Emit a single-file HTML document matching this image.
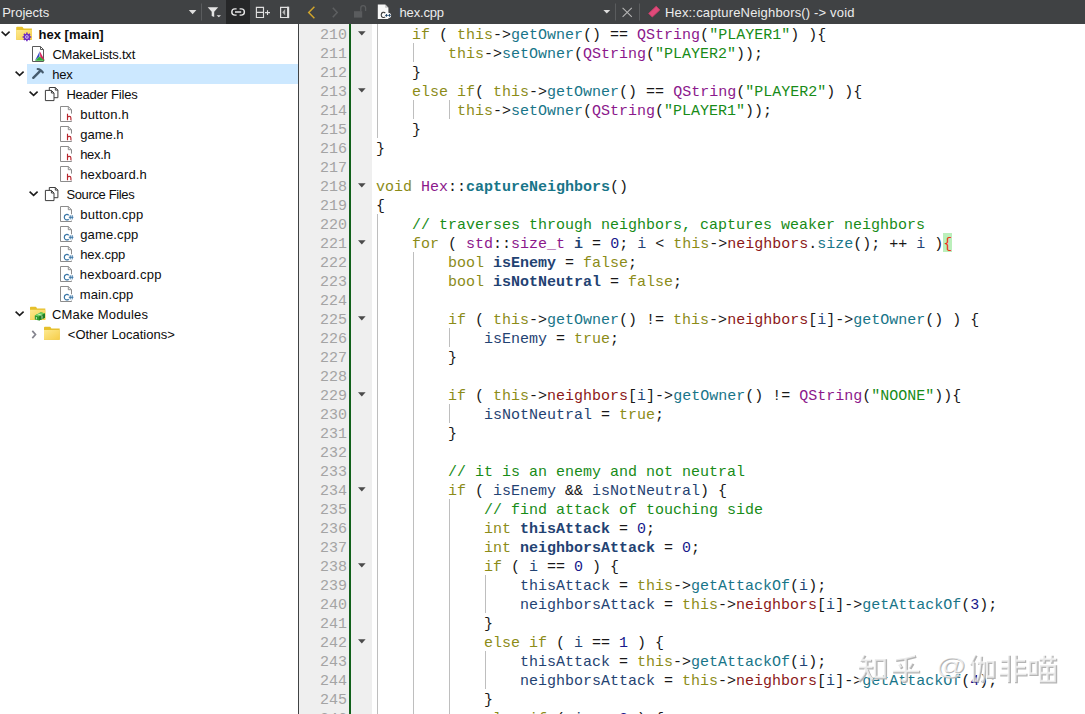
<!DOCTYPE html>
<html>
<head>
<meta charset="utf-8">
<title>hex.cpp - Qt Creator</title>
<style>
*{box-sizing:border-box;margin:0;padding:0}
html,body{width:1085px;height:714px;overflow:hidden;background:#fff;font-family:"Liberation Sans",sans-serif}
body{position:relative;font-family:"Liberation Sans",sans-serif;font-size:13px;color:#1a1a1a}
#topbar{position:absolute;left:0;top:0;width:1085px;height:24px;background:#404244}
#topbar .t{position:absolute;top:1px;height:24px;line-height:24px;color:#ececec;font-size:13px;white-space:nowrap}
#topbar svg{position:absolute}
.sep{position:absolute;top:3px;width:1px;height:18px;background:#595b5d}
#linkbg{position:absolute;left:226px;top:0;width:24px;height:24px;background:#262728}
#splitter{position:absolute;left:298px;top:0;width:1px;height:714px;background:#404244}
/* sidebar */
#side{position:absolute;left:0;top:0;width:298px;height:714px}
.row{position:absolute;left:0;width:298px;height:20px}
.row .sel{position:absolute;left:27px;top:0;width:271px;height:20px;background:#cce8ff}
.row .chev{position:absolute;top:7px}
.row .ic{position:absolute}
.row .tx{position:absolute;top:1px;height:20px;line-height:20px;font-size:13px;color:#0c0c0c;white-space:nowrap}
.row .tx.b{font-weight:bold}
/* editor */
#gutter{position:absolute;left:299px;top:24px;width:73px;height:690px;background:#efefef}
#green{position:absolute;left:349px;top:24px;width:2px;height:690px;background:#10601a}
.ln{position:absolute;left:299px;width:48px;height:19px;line-height:19px;text-align:right;font-family:"Liberation Mono",monospace;font-size:15px;color:#a4a4a4}
.cl{position:absolute;height:19px;line-height:19px;font-family:"Liberation Mono",monospace;font-size:15px;color:#000;white-space:pre;opacity:0.9}
.cl b{font-weight:bold}
.hl{position:relative;color:#f01800}
.hl::before{content:"";position:absolute;left:0;right:0;top:-3px;height:19px;background:#b4eeb4;z-index:-1}
.fold{position:absolute;left:358px}
.gd{position:absolute;width:1px;background:#bebebe}
</style>
</head>
<body>
<div id="side">
<div class="row" style="top:24px"><svg class="ic" style="left:0px;top:0" width="13" height="20" viewBox="0 0 13 20"><path d="M1.6 7.7 L5.6 11.4 L9.6 7.7" fill="none" stroke="#1c1c1c" stroke-width="1.6"/></svg><svg class="ic" style="left:15px;top:0" width="19" height="20" viewBox="15 0 19 20"><defs><linearGradient id="fg16" x1="0" y1="0" x2="1" y2="1"><stop offset="0" stop-color="#fde98f"/><stop offset="1" stop-color="#f6cd48"/></linearGradient></defs><path d="M16.2 3.7 q0 -0.9 0.9 -0.9 h5 q0.6 0 0.9 0.6 l0.6 1.2 h8.3 v11.1 h-15.7z" fill="#e6c02c"/><path d="M16.2 6 h15.7 v9.7 h-15.7z" fill="url(#fg16)"/><path d="M29.50 12.90 L31.20 12.90 M28.74 14.74 L29.94 15.94 M26.90 15.50 L26.90 17.20 M25.06 14.74 L23.86 15.94 M24.30 12.90 L22.60 12.90 M25.06 11.06 L23.86 9.86 M26.90 10.30 L26.90 8.60 M28.74 11.06 L29.94 9.86 " stroke="#6d2cc0" stroke-width="1.5" fill="none"/><circle cx="26.9" cy="12.9" r="2.5" fill="#efe4fb" stroke="#6d2cc0" stroke-width="1.5"/><circle cx="26.9" cy="12.9" r="0.9" fill="#6d2cc0"/></svg><span class="tx b" id="r0" style="left:38.5px;letter-spacing:0.018px">hex [main]</span></div>
<div class="row" style="top:44px"><svg class="ic" style="left:31px;top:0" width="15" height="20" viewBox="31 0 15 20"><path d="M32.5 2.5 h8 l3 3 v12 h-11z" fill="#fff" stroke="#5a5a5a" stroke-width="1"/><path d="M40.5 2.5 v3 h3" fill="none" stroke="#5a5a5a" stroke-width="1"/><path d="M39.8 7.2 L35 16.5 L39.4 12.6z" fill="#3a4cc4"/><path d="M39.8 7.2 L44.8 16.5 L40.4 14z" fill="#d8245c"/><path d="M35 16.7 L39.4 12.4 L44.8 16.7z" fill="#2eae3a"/></svg><span class="tx" id="r1" style="left:52.4px;letter-spacing:-0.184px">CMakeLists.txt</span></div>
<div class="row" style="top:64px"><div class="sel"></div><svg class="ic" style="left:13px;top:0" width="13" height="20" viewBox="13 0 13 20"><path d="M15.6 7.7 L19.6 11.4 L23.6 7.7" fill="none" stroke="#1c1c1c" stroke-width="1.6"/></svg><svg class="ic" style="left:31px;top:0" width="15" height="20" viewBox="31 0 15 20"><path d="M33.3 13.8 L40 7.1" stroke="#455b6e" stroke-width="2.4" stroke-linecap="round" fill="none"/><path d="M37.7 5 Q40.6 5.2 42.8 8.3" stroke="#455b6e" stroke-width="2.2" stroke-linecap="round" fill="none"/></svg><span class="tx" id="r2" style="left:52.2px;letter-spacing:-0.2px">hex</span></div>
<div class="row" style="top:84px"><svg class="ic" style="left:27px;top:0" width="13" height="20" viewBox="27 0 13 20"><path d="M29.6 7.7 L33.6 11.4 L37.6 7.7" fill="none" stroke="#1c1c1c" stroke-width="1.6"/></svg><svg class="ic" style="left:44px;top:0" width="16" height="20" viewBox="44 0 16 20"><path d="M49.3 3.5 h6 l2.6 2.6 v7.6 h-8.6z" fill="#fff" stroke="#3e3e3e" stroke-width="1"/><path d="M55.3 3.5 v2.6 h2.6" fill="none" stroke="#3e3e3e" stroke-width="1"/><path d="M45.4 6.4 h6 l2.6 2.6 v7.6 h-8.6z" fill="#fff" stroke="#3e3e3e" stroke-width="1"/><path d="M51.4 6.4 v2.6 h2.6" fill="none" stroke="#3e3e3e" stroke-width="1"/></svg><span class="tx" id="r3" style="left:66.4px;letter-spacing:-0.219px">Header Files</span></div>
<div class="row" style="top:104px"><svg class="ic" style="left:59px;top:0" width="15" height="20" viewBox="59 0 15 20"><path d="M60.5 2.5 h7.8 l3.2 3.2 v11.8 h-11z" fill="#fff" stroke="#8c8c8c" stroke-width="1"/><path d="M68.3 2.5 v3.2 h3.2" fill="none" stroke="#8c8c8c" stroke-width="1"/><rect x="66" y="9.6" width="7" height="7" fill="#fff"/><path d="M67.5 9.8 v6.4 M67.5 13.4 c0.5 -1.3 3.4 -1.6 3.4 0.5 v2.3" fill="none" stroke="#b8272f" stroke-width="1.15"/></svg><span class="tx" id="r4" style="left:80.2px;letter-spacing:0.229px">button.h</span></div>
<div class="row" style="top:124px"><svg class="ic" style="left:59px;top:0" width="15" height="20" viewBox="59 0 15 20"><path d="M60.5 2.5 h7.8 l3.2 3.2 v11.8 h-11z" fill="#fff" stroke="#8c8c8c" stroke-width="1"/><path d="M68.3 2.5 v3.2 h3.2" fill="none" stroke="#8c8c8c" stroke-width="1"/><rect x="66" y="9.6" width="7" height="7" fill="#fff"/><path d="M67.5 9.8 v6.4 M67.5 13.4 c0.5 -1.3 3.4 -1.6 3.4 0.5 v2.3" fill="none" stroke="#b8272f" stroke-width="1.15"/></svg><span class="tx" id="r5" style="left:80.2px;letter-spacing:0px">game.h</span></div>
<div class="row" style="top:144px"><svg class="ic" style="left:59px;top:0" width="15" height="20" viewBox="59 0 15 20"><path d="M60.5 2.5 h7.8 l3.2 3.2 v11.8 h-11z" fill="#fff" stroke="#8c8c8c" stroke-width="1"/><path d="M68.3 2.5 v3.2 h3.2" fill="none" stroke="#8c8c8c" stroke-width="1"/><rect x="66" y="9.6" width="7" height="7" fill="#fff"/><path d="M67.5 9.8 v6.4 M67.5 13.4 c0.5 -1.3 3.4 -1.6 3.4 0.5 v2.3" fill="none" stroke="#b8272f" stroke-width="1.15"/></svg><span class="tx" id="r6" style="left:80.2px;letter-spacing:-0.3px">hex.h</span></div>
<div class="row" style="top:164px"><svg class="ic" style="left:59px;top:0" width="15" height="20" viewBox="59 0 15 20"><path d="M60.5 2.5 h7.8 l3.2 3.2 v11.8 h-11z" fill="#fff" stroke="#8c8c8c" stroke-width="1"/><path d="M68.3 2.5 v3.2 h3.2" fill="none" stroke="#8c8c8c" stroke-width="1"/><rect x="66" y="9.6" width="7" height="7" fill="#fff"/><path d="M67.5 9.8 v6.4 M67.5 13.4 c0.5 -1.3 3.4 -1.6 3.4 0.5 v2.3" fill="none" stroke="#b8272f" stroke-width="1.15"/></svg><span class="tx" id="r7" style="left:80.2px;letter-spacing:0.178px">hexboard.h</span></div>
<div class="row" style="top:184px"><svg class="ic" style="left:27px;top:0" width="13" height="20" viewBox="27 0 13 20"><path d="M29.6 7.7 L33.6 11.4 L37.6 7.7" fill="none" stroke="#1c1c1c" stroke-width="1.6"/></svg><svg class="ic" style="left:44px;top:0" width="16" height="20" viewBox="44 0 16 20"><path d="M49.3 3.5 h6 l2.6 2.6 v7.6 h-8.6z" fill="#fff" stroke="#3e3e3e" stroke-width="1"/><path d="M55.3 3.5 v2.6 h2.6" fill="none" stroke="#3e3e3e" stroke-width="1"/><path d="M45.4 6.4 h6 l2.6 2.6 v7.6 h-8.6z" fill="#fff" stroke="#3e3e3e" stroke-width="1"/><path d="M51.4 6.4 v2.6 h2.6" fill="none" stroke="#3e3e3e" stroke-width="1"/></svg><span class="tx" id="r8" style="left:66.4px;letter-spacing:-0.364px">Source Files</span></div>
<div class="row" style="top:204px"><svg class="ic" style="left:59px;top:0" width="16" height="20" viewBox="59 0 16 20"><path d="M60.5 2.5 h7.8 l3.2 3.2 v11.8 h-11z" fill="#fff" stroke="#8c8c8c" stroke-width="1"/><path d="M68.3 2.5 v3.2 h3.2" fill="none" stroke="#8c8c8c" stroke-width="1"/><rect x="68" y="10.2" width="6" height="6.4" fill="#fff"/><path d="M68.6 11.3 c-0.9 -1.4 -4.3 -1.3 -4.3 1.9 c0 3.2 3.4 3.3 4.3 1.9" fill="none" stroke="#3a76a6" stroke-width="1.25"/><path d="M68.8 13.3 h4.6 M70.2 11.2 v4.2 M72.2 11.2 v4.2" stroke="#3a76a6" stroke-width="1" fill="none"/></svg><span class="tx" id="r9" style="left:80.2px;letter-spacing:0.268px">button.cpp</span></div>
<div class="row" style="top:224px"><svg class="ic" style="left:59px;top:0" width="16" height="20" viewBox="59 0 16 20"><path d="M60.5 2.5 h7.8 l3.2 3.2 v11.8 h-11z" fill="#fff" stroke="#8c8c8c" stroke-width="1"/><path d="M68.3 2.5 v3.2 h3.2" fill="none" stroke="#8c8c8c" stroke-width="1"/><rect x="68" y="10.2" width="6" height="6.4" fill="#fff"/><path d="M68.6 11.3 c-0.9 -1.4 -4.3 -1.3 -4.3 1.9 c0 3.2 3.4 3.3 4.3 1.9" fill="none" stroke="#3a76a6" stroke-width="1.25"/><path d="M68.8 13.3 h4.6 M70.2 11.2 v4.2 M72.2 11.2 v4.2" stroke="#3a76a6" stroke-width="1" fill="none"/></svg><span class="tx" id="r10" style="left:80.2px;letter-spacing:0.142px">game.cpp</span></div>
<div class="row" style="top:244px"><svg class="ic" style="left:59px;top:0" width="16" height="20" viewBox="59 0 16 20"><path d="M60.5 2.5 h7.8 l3.2 3.2 v11.8 h-11z" fill="#fff" stroke="#8c8c8c" stroke-width="1"/><path d="M68.3 2.5 v3.2 h3.2" fill="none" stroke="#8c8c8c" stroke-width="1"/><rect x="68" y="10.2" width="6" height="6.4" fill="#fff"/><path d="M68.6 11.3 c-0.9 -1.4 -4.3 -1.3 -4.3 1.9 c0 3.2 3.4 3.3 4.3 1.9" fill="none" stroke="#3a76a6" stroke-width="1.25"/><path d="M68.8 13.3 h4.6 M70.2 11.2 v4.2 M72.2 11.2 v4.2" stroke="#3a76a6" stroke-width="1" fill="none"/></svg><span class="tx" id="r11" style="left:80.2px;letter-spacing:-0.068px">hex.cpp</span></div>
<div class="row" style="top:264px"><svg class="ic" style="left:59px;top:0" width="16" height="20" viewBox="59 0 16 20"><path d="M60.5 2.5 h7.8 l3.2 3.2 v11.8 h-11z" fill="#fff" stroke="#8c8c8c" stroke-width="1"/><path d="M68.3 2.5 v3.2 h3.2" fill="none" stroke="#8c8c8c" stroke-width="1"/><rect x="68" y="10.2" width="6" height="6.4" fill="#fff"/><path d="M68.6 11.3 c-0.9 -1.4 -4.3 -1.3 -4.3 1.9 c0 3.2 3.4 3.3 4.3 1.9" fill="none" stroke="#3a76a6" stroke-width="1.25"/><path d="M68.8 13.3 h4.6 M70.2 11.2 v4.2 M72.2 11.2 v4.2" stroke="#3a76a6" stroke-width="1" fill="none"/></svg><span class="tx" id="r12" style="left:79.8px;letter-spacing:0.255px">hexboard.cpp</span></div>
<div class="row" style="top:284px"><svg class="ic" style="left:59px;top:0" width="16" height="20" viewBox="59 0 16 20"><path d="M60.5 2.5 h7.8 l3.2 3.2 v11.8 h-11z" fill="#fff" stroke="#8c8c8c" stroke-width="1"/><path d="M68.3 2.5 v3.2 h3.2" fill="none" stroke="#8c8c8c" stroke-width="1"/><rect x="68" y="10.2" width="6" height="6.4" fill="#fff"/><path d="M68.6 11.3 c-0.9 -1.4 -4.3 -1.3 -4.3 1.9 c0 3.2 3.4 3.3 4.3 1.9" fill="none" stroke="#3a76a6" stroke-width="1.25"/><path d="M68.8 13.3 h4.6 M70.2 11.2 v4.2 M72.2 11.2 v4.2" stroke="#3a76a6" stroke-width="1" fill="none"/></svg><span class="tx" id="r13" style="left:79.8px;letter-spacing:0.114px">main.cpp</span></div>
<div class="row" style="top:304px"><svg class="ic" style="left:13px;top:0" width="13" height="20" viewBox="13 0 13 20"><path d="M15.6 7.7 L19.6 11.4 L23.6 7.7" fill="none" stroke="#1c1c1c" stroke-width="1.6"/></svg><svg class="ic" style="left:29px;top:0" width="18" height="20" viewBox="29 0 18 20"><defs><linearGradient id="fgm" x1="0" y1="0" x2="1" y2="1"><stop offset="0" stop-color="#fde98f"/><stop offset="1" stop-color="#f6cd48"/></linearGradient></defs><path d="M30 3.6 q0 -0.9 0.9 -0.9 h4.6 q0.6 0 0.9 0.6 l0.6 1.2 h8.3 v11.2 h-15.3z" fill="#e6c02c"/><path d="M30 5.8 h15.3 v9.9 h-15.3z" fill="url(#fgm)"/><path d="M34.8 11.6 L40.8 8.2 L45 9.4 L45 13.8 L39 16.6 L34.8 15.4z" fill="#2f9a30"/><path d="M34.8 11.6 L40.8 8.2 L45 9.4 L39 12.6z" fill="#6fd060"/><path d="M39 12.6 L45 9.4 L45 13.8 L39 16.6z" fill="#1f7d24"/><path d="M37.6 9.9 L41.6 11.2 M36.4 13 v2.4 M42 11.6 v3.2" stroke="#dff5d8" stroke-width="0.8" fill="none"/></svg><span class="tx" id="r14" style="left:52px;letter-spacing:0.167px">CMake Modules</span></div>
<div class="row" style="top:324px"><svg class="ic" style="left:30px;top:0" width="9" height="20" viewBox="30 0 9 20"><path d="M32.3 6.9 L35.5 10.5 L32.3 14.1" fill="none" stroke="#84848e" stroke-width="1.7"/></svg><svg class="ic" style="left:43px;top:0" width="19" height="20" viewBox="43 0 19 20"><defs><linearGradient id="fg44" x1="0" y1="0" x2="1" y2="1"><stop offset="0" stop-color="#fde98f"/><stop offset="1" stop-color="#f6cd48"/></linearGradient></defs><path d="M44 3.7 q0 -0.9 0.9 -0.9 h5 q0.6 0 0.9 0.6 l0.6 1.2 h8.3 v11.1 h-15.7z" fill="#e6c02c"/><path d="M44 6 h15.7 v9.7 h-15.7z" fill="url(#fg44)"/></svg><span class="tx" id="r15" style="left:67.8px;letter-spacing:-0.001px">&lt;Other Locations&gt;</span></div>
</div>
<div id="gutter"></div>
<div id="green"></div>
<div id="guides">
<div class="gd" style="left:377px;top:24px;height:114px"></div>
<div class="gd" style="left:377px;top:214px;height:513px"></div>
<div class="gd" style="left:413px;top:43px;height:19px"></div>
<div class="gd" style="left:413px;top:100px;height:19px"></div>
<div class="gd" style="left:413px;top:252px;height:475px"></div>
<div class="gd" style="left:449px;top:100px;height:19px"></div>
<div class="gd" style="left:449px;top:328px;height:19px"></div>
<div class="gd" style="left:449px;top:404px;height:19px"></div>
<div class="gd" style="left:449px;top:499px;height:228px"></div>
<div class="gd" style="left:485px;top:575px;height:38px"></div>
<div class="gd" style="left:485px;top:651px;height:38px"></div>
</div>
<div id="code">
<div class="ln" style="top:26px">210</div>
<svg class="fold" style="top:31px" width="8" height="5" viewBox="0 0 8 5"><path d="M0 0.3 h7.6 l-3.8 4.2z" fill="#4a4a4a"/></svg>
<div class="cl" style="top:26px;left:412px"><span style="color:#808000">if</span> ( <span style="color:#808000">this</span>-&gt;<span style="color:#00677c">getOwner</span>() == <span style="color:#800080">QString</span>(<span style="color:#008000">"PLAYER1"</span>) ){</div>
<div class="ln" style="top:45px">211</div>
<div class="cl" style="top:45px;left:448px"><span style="color:#808000">this</span>-&gt;<span style="color:#00677c">setOwner</span>(<span style="color:#800080">QString</span>(<span style="color:#008000">"PLAYER2"</span>));</div>
<div class="ln" style="top:64px">212</div>
<div class="cl" style="top:64px;left:412px">}</div>
<div class="ln" style="top:83px">213</div>
<svg class="fold" style="top:88px" width="8" height="5" viewBox="0 0 8 5"><path d="M0 0.3 h7.6 l-3.8 4.2z" fill="#4a4a4a"/></svg>
<div class="cl" style="top:83px;left:412px"><span style="color:#808000">else</span> <span style="color:#808000">if</span>( <span style="color:#808000">this</span>-&gt;<span style="color:#00677c">getOwner</span>() == <span style="color:#800080">QString</span>(<span style="color:#008000">"PLAYER2"</span>) ){</div>
<div class="ln" style="top:102px">214</div>
<div class="cl" style="top:102px;left:457px"><span style="color:#808000">this</span>-&gt;<span style="color:#00677c">setOwner</span>(<span style="color:#800080">QString</span>(<span style="color:#008000">"PLAYER1"</span>));</div>
<div class="ln" style="top:121px">215</div>
<div class="cl" style="top:121px;left:412px">}</div>
<div class="ln" style="top:140px">216</div>
<div class="cl" style="top:140px;left:376px">}</div>
<div class="ln" style="top:159px">217</div>
<div class="ln" style="top:178px">218</div>
<svg class="fold" style="top:183px" width="8" height="5" viewBox="0 0 8 5"><path d="M0 0.3 h7.6 l-3.8 4.2z" fill="#4a4a4a"/></svg>
<div class="cl" style="top:178px;left:376px"><span style="color:#808000">void</span> <span style="color:#800080">Hex</span>::<b class="fb" style="color:#00677c">captureNeighbors</b>()</div>
<div class="ln" style="top:197px">219</div>
<div class="cl" style="top:197px;left:376px">{</div>
<div class="ln" style="top:216px">220</div>
<div class="cl" style="top:216px;left:412px"><span style="color:#008000">// traverses through neighbors, captures weaker neighbors</span></div>
<div class="ln" style="top:235px">221</div>
<svg class="fold" style="top:240px" width="8" height="5" viewBox="0 0 8 5"><path d="M0 0.3 h7.6 l-3.8 4.2z" fill="#4a4a4a"/></svg>
<div class="cl" style="top:235px;left:412px"><span style="color:#808000">for</span> ( <span style="color:#800080">std</span>::<span style="color:#800080">size_t</span> <b class="vb" style="color:#092e64">i</b> = <span style="color:#000080">0</span>; <span style="color:#092e64">i</span> &lt; <span style="color:#808000">this</span>-&gt;<span style="color:#800000">neighbors</span>.<span style="color:#00677c">size</span>(); ++ <span style="color:#092e64">i</span> )<span class="hl">{</span></div>
<div class="ln" style="top:254px">222</div>
<div class="cl" style="top:254px;left:448px"><span style="color:#808000">bool</span> <b class="vb" style="color:#092e64">isEnemy</b> = <span style="color:#808000">false</span>;</div>
<div class="ln" style="top:273px">223</div>
<div class="cl" style="top:273px;left:448px"><span style="color:#808000">bool</span> <b class="vb" style="color:#092e64">isNotNeutral</b> = <span style="color:#808000">false</span>;</div>
<div class="ln" style="top:292px">224</div>
<div class="ln" style="top:311px">225</div>
<svg class="fold" style="top:316px" width="8" height="5" viewBox="0 0 8 5"><path d="M0 0.3 h7.6 l-3.8 4.2z" fill="#4a4a4a"/></svg>
<div class="cl" style="top:311px;left:448px"><span style="color:#808000">if</span> ( <span style="color:#808000">this</span>-&gt;<span style="color:#00677c">getOwner</span>() != <span style="color:#808000">this</span>-&gt;<span style="color:#800000">neighbors</span>[<span style="color:#092e64">i</span>]-&gt;<span style="color:#00677c">getOwner</span>() ) {</div>
<div class="ln" style="top:330px">226</div>
<div class="cl" style="top:330px;left:484px"><span style="color:#092e64">isEnemy</span> = <span style="color:#808000">true</span>;</div>
<div class="ln" style="top:349px">227</div>
<div class="cl" style="top:349px;left:448px">}</div>
<div class="ln" style="top:368px">228</div>
<div class="ln" style="top:387px">229</div>
<svg class="fold" style="top:392px" width="8" height="5" viewBox="0 0 8 5"><path d="M0 0.3 h7.6 l-3.8 4.2z" fill="#4a4a4a"/></svg>
<div class="cl" style="top:387px;left:448px"><span style="color:#808000">if</span> ( <span style="color:#808000">this</span>-&gt;<span style="color:#800000">neighbors</span>[<span style="color:#092e64">i</span>]-&gt;<span style="color:#00677c">getOwner</span>() != <span style="color:#800080">QString</span>(<span style="color:#008000">"NOONE"</span>)){</div>
<div class="ln" style="top:406px">230</div>
<div class="cl" style="top:406px;left:484px"><span style="color:#092e64">isNotNeutral</span> = <span style="color:#808000">true</span>;</div>
<div class="ln" style="top:425px">231</div>
<div class="cl" style="top:425px;left:448px">}</div>
<div class="ln" style="top:444px">232</div>
<div class="ln" style="top:463px">233</div>
<div class="cl" style="top:463px;left:448px"><span style="color:#008000">// it is an enemy and not neutral</span></div>
<div class="ln" style="top:482px">234</div>
<svg class="fold" style="top:487px" width="8" height="5" viewBox="0 0 8 5"><path d="M0 0.3 h7.6 l-3.8 4.2z" fill="#4a4a4a"/></svg>
<div class="cl" style="top:482px;left:448px"><span style="color:#808000">if</span> ( <span style="color:#092e64">isEnemy</span> &amp;&amp; <span style="color:#092e64">isNotNeutral</span>) {</div>
<div class="ln" style="top:501px">235</div>
<div class="cl" style="top:501px;left:484px"><span style="color:#008000">// find attack of touching side</span></div>
<div class="ln" style="top:520px">236</div>
<div class="cl" style="top:520px;left:484px"><span style="color:#808000">int</span> <b class="vb" style="color:#092e64">thisAttack</b> = <span style="color:#000080">0</span>;</div>
<div class="ln" style="top:539px">237</div>
<div class="cl" style="top:539px;left:484px"><span style="color:#808000">int</span> <b class="vb" style="color:#092e64">neighborsAttack</b> = <span style="color:#000080">0</span>;</div>
<div class="ln" style="top:558px">238</div>
<svg class="fold" style="top:563px" width="8" height="5" viewBox="0 0 8 5"><path d="M0 0.3 h7.6 l-3.8 4.2z" fill="#4a4a4a"/></svg>
<div class="cl" style="top:558px;left:484px"><span style="color:#808000">if</span> ( <span style="color:#092e64">i</span> == <span style="color:#000080">0</span> ) {</div>
<div class="ln" style="top:577px">239</div>
<div class="cl" style="top:577px;left:520px"><span style="color:#092e64">thisAttack</span> = <span style="color:#808000">this</span>-&gt;<span style="color:#00677c">getAttackOf</span>(<span style="color:#092e64">i</span>);</div>
<div class="ln" style="top:596px">240</div>
<div class="cl" style="top:596px;left:520px"><span style="color:#092e64">neighborsAttack</span> = <span style="color:#808000">this</span>-&gt;<span style="color:#800000">neighbors</span>[<span style="color:#092e64">i</span>]-&gt;<span style="color:#00677c">getAttackOf</span>(<span style="color:#000080">3</span>);</div>
<div class="ln" style="top:615px">241</div>
<div class="cl" style="top:615px;left:484px">}</div>
<div class="ln" style="top:634px">242</div>
<svg class="fold" style="top:639px" width="8" height="5" viewBox="0 0 8 5"><path d="M0 0.3 h7.6 l-3.8 4.2z" fill="#4a4a4a"/></svg>
<div class="cl" style="top:634px;left:484px"><span style="color:#808000">else</span> <span style="color:#808000">if</span> ( <span style="color:#092e64">i</span> == <span style="color:#000080">1</span> ) {</div>
<div class="ln" style="top:653px">243</div>
<div class="cl" style="top:653px;left:520px"><span style="color:#092e64">thisAttack</span> = <span style="color:#808000">this</span>-&gt;<span style="color:#00677c">getAttackOf</span>(<span style="color:#092e64">i</span>);</div>
<div class="ln" style="top:672px">244</div>
<div class="cl" style="top:672px;left:520px"><span style="color:#092e64">neighborsAttack</span> = <span style="color:#808000">this</span>-&gt;<span style="color:#800000">neighbors</span>[<span style="color:#092e64">i</span>]-&gt;<span style="color:#00677c">getAttackOf</span>(<span style="color:#000080">4</span>);</div>
<div class="ln" style="top:691px">245</div>
<div class="cl" style="top:691px;left:484px">}</div>
<div class="ln" style="top:710px">246</div>
<svg class="fold" style="top:715px" width="8" height="5" viewBox="0 0 8 5"><path d="M0 0.3 h7.6 l-3.8 4.2z" fill="#4a4a4a"/></svg>
<div class="cl" style="top:710px;left:484px"><span style="color:#808000">else</span> <span style="color:#808000">if</span> ( <span style="color:#092e64">i</span> == <span style="color:#000080">2</span> ) {</div>
</div>
<svg id="wm" style="position:absolute;left:855px;top:651px" width="206" height="36" viewBox="0 0 206 36">
  
  <g fill="none" stroke-linecap="butt" stroke-linejoin="miter" stroke="#b4b4b4" stroke-width="2.8" transform="translate(1.2,1.2)">
      <!-- zhi -->
      <g transform="translate(2,3)">
        <path d="M7 0.5 L3.5 7 M4.5 6 H14 M1 13 H15.5 M9 6 V13 Q8 21 1 26.5 M9.5 15 Q11.5 22 15.5 25.5 M18 5.5 H27.5 V23 H18 Z"/>
      </g>
      <!-- hu -->
      <g transform="translate(36,3)">
        <path d="M24 1.5 Q14 4.5 4 5.5 M7.5 9 L10 13.5 M21 8.5 L18 13.5 M1 17 H28 M14.5 5 V25 Q14.5 27.5 10 26"/>
      </g>
      <!-- jia -->
      <g transform="translate(113.5,3) scale(0.9,1)">
        <path d="M7.5 0.5 L2 10.5 M5.2 7.5 V27.5 M9.5 8.5 H17.5 Q17.5 22 15.5 26.5 l-2.5 -1 M13.5 1.5 Q13.5 18 8.5 27.5 M20.5 7.5 H27.5 V22.5 H20.5 Z"/>
      </g>
      <!-- fei -->
      <g transform="translate(143,3)">
        <path d="M10.4 0.5 V28 M17.3 0.5 V28 M2.5 6.5 H10.4 M2.5 13 H10.4 M1 20 H10.4 M17.3 6.5 H27 M17.3 13 H27 M17.3 20 H28.4"/>
      </g>
      <!-- miao -->
      <g transform="translate(173.6,3)">
        <path d="M1 7.5 H7.5 V19.5 H1 Z M10 5 H27.5 M15 0.5 V8.5 M22.5 0.5 V8.5 M11.5 11.5 H26 V27 H11.5 Z M11.5 19 H26 M18.7 11.5 V27"/>
      </g>
    </g>
  <text transform="translate(81.8,24.1) scale(1.25,1)" font-family="Liberation Sans, sans-serif" font-size="24" fill="#b4b4b4">@</text>
  <g fill="none" stroke-linecap="butt" stroke-linejoin="miter" stroke="#ffffff" stroke-width="2.4" stroke-opacity="0.7">
      <!-- zhi -->
      <g transform="translate(2,3)">
        <path d="M7 0.5 L3.5 7 M4.5 6 H14 M1 13 H15.5 M9 6 V13 Q8 21 1 26.5 M9.5 15 Q11.5 22 15.5 25.5 M18 5.5 H27.5 V23 H18 Z"/>
      </g>
      <!-- hu -->
      <g transform="translate(36,3)">
        <path d="M24 1.5 Q14 4.5 4 5.5 M7.5 9 L10 13.5 M21 8.5 L18 13.5 M1 17 H28 M14.5 5 V25 Q14.5 27.5 10 26"/>
      </g>
      <!-- jia -->
      <g transform="translate(113.5,3) scale(0.9,1)">
        <path d="M7.5 0.5 L2 10.5 M5.2 7.5 V27.5 M9.5 8.5 H17.5 Q17.5 22 15.5 26.5 l-2.5 -1 M13.5 1.5 Q13.5 18 8.5 27.5 M20.5 7.5 H27.5 V22.5 H20.5 Z"/>
      </g>
      <!-- fei -->
      <g transform="translate(143,3)">
        <path d="M10.4 0.5 V28 M17.3 0.5 V28 M2.5 6.5 H10.4 M2.5 13 H10.4 M1 20 H10.4 M17.3 6.5 H27 M17.3 13 H27 M17.3 20 H28.4"/>
      </g>
      <!-- miao -->
      <g transform="translate(173.6,3)">
        <path d="M1 7.5 H7.5 V19.5 H1 Z M10 5 H27.5 M15 0.5 V8.5 M22.5 0.5 V8.5 M11.5 11.5 H26 V27 H11.5 Z M11.5 19 H26 M18.7 11.5 V27"/>
      </g>
    </g>
  <text transform="translate(80.8,23.1) scale(1.25,1)" font-family="Liberation Sans, sans-serif" font-size="24" fill="#ffffff" fill-opacity="0.7">@</text>
</svg>
<div id="splitter"></div>
<div id="topbar">
  <div id="linkbg"></div>
  <svg style="left:0;top:0" width="1085" height="24" viewBox="0 0 1085 24">
    <!-- projects dropdown arrow -->
    <path d="M188.8 10 h7.6 l-3.8 4.2z" fill="#dedede"/>
    <path d="M201.5 3.5 v17" stroke="#5a5c5e" stroke-width="1"/>
    <!-- filter -->
    <path d="M207.7 7.2 h10.5 l-4 4.6 v5.3 l-2.5 -1.2 v-4.1z" fill="#e4e4e4"/>
    <path d="M216.6 15.2 h4.4 l-2.2 2.1z" fill="#e4e4e4"/>
    <!-- link -->
    <path d="M236.6 8.9 h-1.7 a3.1 3.1 0 0 0 0 6.2 h1.7 M239.6 8.9 h1.7 a3.1 3.1 0 0 1 0 6.2 h-1.7 M235 12 h6.2" fill="none" stroke="#e6e6e6" stroke-width="1.4"/>
    <!-- split -->
    <path d="M256.4 7.3 h7.1 v10.2 h-7.1z M256.4 12.4 h7.1" fill="none" stroke="#e0e0e0" stroke-width="1.15"/>
    <path d="M265 12.6 h5 M267.5 10.2 v4.8" stroke="#e0e0e0" stroke-width="1.1" fill="none"/>
    <!-- close side -->
    <path d="M280.6 7.3 h7.2 v10.2 h-7.2z" fill="none" stroke="#e0e0e0" stroke-width="1.2"/>
    <path d="M287.2 6.7 h2 v11.4 h-2z" fill="#e0e0e0"/>
    <path d="M285.2 9 v6.6 l-3 -3.3z" fill="#b4b4b4"/>
    <!-- back -->
    <path d="M314.4 6.8 L308.7 12.5 L314.4 18.2" fill="none" stroke="#d2a62c" stroke-width="1.45"/>
    <!-- forward -->
    <path d="M332.8 7.8 L337.2 12.5 L332.8 17.2" fill="none" stroke="#5d5f61" stroke-width="1.5"/>
    <!-- lock -->
    <path d="M354 11.2 h8.2 v6.4 h-8.2z" fill="#5a5c5e"/>
    <path d="M360.8 11.4 v-3.3 a2.4 2.4 0 0 1 4.8 0 v2.8" fill="none" stroke="#5a5c5e" stroke-width="1.3"/>
    <!-- file icon -->
    <path d="M377.8 4.5 h7.4 l3.2 3.2 v11.2 h-10.6z" fill="#f8f8f8"/>
    <path d="M385.2 4.5 v3.2 h3.2z" fill="#c4c4c4"/>
    <ellipse cx="388" cy="15.4" rx="3.1" ry="2.7" fill="#f8f8f8"/>
    <path d="M385.2 13.1 c-0.8 -1.3 -4 -1.2 -4 1.8 c0 3 3.2 3.1 4 1.8" fill="none" stroke="#3c3c3c" stroke-width="1.1"/>
    <path d="M385.2 15.4 h2.6 M386.5 14.1 v2.6 M388.2 15.4 h2.6 M389.5 14.1 v2.6" stroke="#1f4468" stroke-width="1" fill="none"/>
    <!-- file dropdown -->
    <path d="M603.4 9.9 h6.8 l-3.4 3.6z" fill="#dedede"/>
    <path d="M615.5 3.5 v17" stroke="#5a5c5e" stroke-width="1"/>
    <path d="M622.6 7.8 L631.8 16.8 M631.8 7.8 L622.6 16.8" stroke="#b4b4b4" stroke-width="1.1" fill="none"/>
    <path d="M639.5 3.5 v17" stroke="#5a5c5e" stroke-width="1"/>
    <!-- symbol diamond -->
    <path d="M656.2 6.3 L659.8 9.9 L652.3 17 L648.7 13.4z" fill="#e04a7a" stroke="#cc3c6a" stroke-width="0.9" stroke-linejoin="round"/>
  </svg>
  <span class="t" id="t0" style="left:2.2px;letter-spacing:-0px">Projects</span>
  <span class="t" id="t1" style="left:399.5px;letter-spacing:-0.166px">hex.cpp</span>
  <span class="t" id="t2" style="left:665px;letter-spacing:0.16px">Hex::captureNeighbors() -&gt; void</span>
</div>
</body>
</html>
